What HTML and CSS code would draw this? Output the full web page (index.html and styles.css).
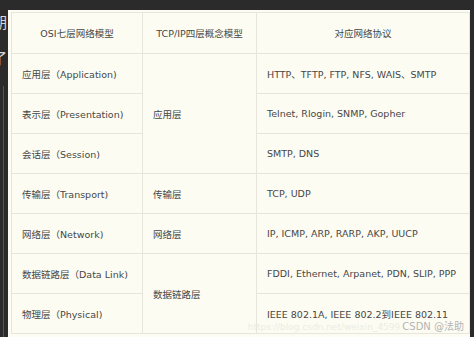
FILE: index.html
```html
<!DOCTYPE html>
<html lang="zh-CN">
<head>
    <meta charset="UTF-8">
    <meta name="viewport" content="width=device-width, initial-scale=1.0">
    <title>OSI七层网络模型</title>
    <link rel="stylesheet" href="styles.css">
</head>
<body>

    <div class="page">
        <div class="side">
            <span class="cut first">期</span>
            <span class="cut">了</span>
            <span class="rule"></span>
        </div>

        <div class="sheet">
            <table class="osi">
                <colgroup>
                    <col class="c1">
                    <col class="c2">
                    <col>
                </colgroup>
                <thead>
                    <tr>
                        <th>OSI七层网络模型</th>
                        <th>TCP/IP四层概念模型</th>
                        <th>对应网络协议</th>
                    </tr>
                </thead>
                <tbody>
                    <tr>
                        <td>应用层（Application)</td>
                        <td rowspan="3">应用层</td>
                        <td>HTTP、TFTP, FTP, NFS, WAIS、SMTP</td>
                    </tr>
                    <tr>
                        <td>表示层（Presentation)</td>
                        <td>Telnet, Rlogin, SNMP, Gopher</td>
                    </tr>
                    <tr>
                        <td>会话层（Session)</td>
                        <td>SMTP, DNS</td>
                    </tr>
                    <tr>
                        <td>传输层（Transport)</td>
                        <td>传输层</td>
                        <td>TCP, UDP</td>
                    </tr>
                    <tr>
                        <td>网络层（Network)</td>
                        <td>网络层</td>
                        <td>IP, ICMP, ARP, RARP, AKP, UUCP</td>
                    </tr>
                    <tr>
                        <td>数据链路层（Data Link)</td>
                        <td rowspan="2">数据链路层</td>
                        <td>FDDI, Ethernet, Arpanet, PDN, SLIP, PPP</td>
                    </tr>
                    <tr>
                        <td>物理层（Physical)</td>
                        <td>IEEE 802.1A, IEEE 802.2到IEEE 802.11</td>
                    </tr>
                </tbody>
            </table>

            <div class="watermark">
                <span class="url">https://blog.csdn.net/weixin_4599</span>
                <span class="mark">CSDN @法助</span>
            </div>
        </div>
    </div>

</body>
</html>
```

FILE: styles.css
```css
body {
    margin: 0;
    background-color: #2b2b2b;
    font-family: "DejaVu Sans", "Noto Sans CJK SC", sans-serif;
    overflow: hidden;
}
.page {
    display: flex;
    height: 337px;
}
.side {
    flex-shrink: 0;
    width: 8px;
    overflow: hidden;
    display: flex;
    flex-direction: column;
    color: #d8d8d8;
    font-size: 15px;
    line-height: 18px;
}
.cut {
    margin-left: -8px;
    height: 18px;
    margin-bottom: 18px;
}
.cut.first {
    margin-top: 14px;
}
.rule {
    width: 1px;
    margin-left: 3px;
    flex: 1;
    background: #555;
}
.sheet {
    position: relative;
    flex: 1;
    min-width: 0;
    margin: 10px 4px 0 0;
    padding: 2px 0 0 3px;
    background-color: #fcfcf3;
    overflow: hidden;
}
.osi {
    width: 100%;
    table-layout: fixed;
    border-collapse: collapse;
    color: #474747;
    font-size: 9.5px;
}
.osi .c1 {
    width: 131px;
}
.osi .c2 {
    width: 114px;
}
.osi th, .osi td {
    border: 1px solid #e6e6dc;
    padding: 0 10px;
    text-align: left;
    white-space: nowrap;
    overflow: hidden;
}
.osi th {
    height: 40px;
    font-weight: normal;
    text-align: center;
}
.osi td {
    height: 39px;
}
.watermark {
    position: absolute;
    right: 6px;
    bottom: 4px;
    display: flex;
    align-items: baseline;
    gap: 2px;
}
.mark {
    font-size: 10px;
    color: #b4b4b4;
}
.url {
    font-size: 9px;
    color: #ecece2;
}
```
